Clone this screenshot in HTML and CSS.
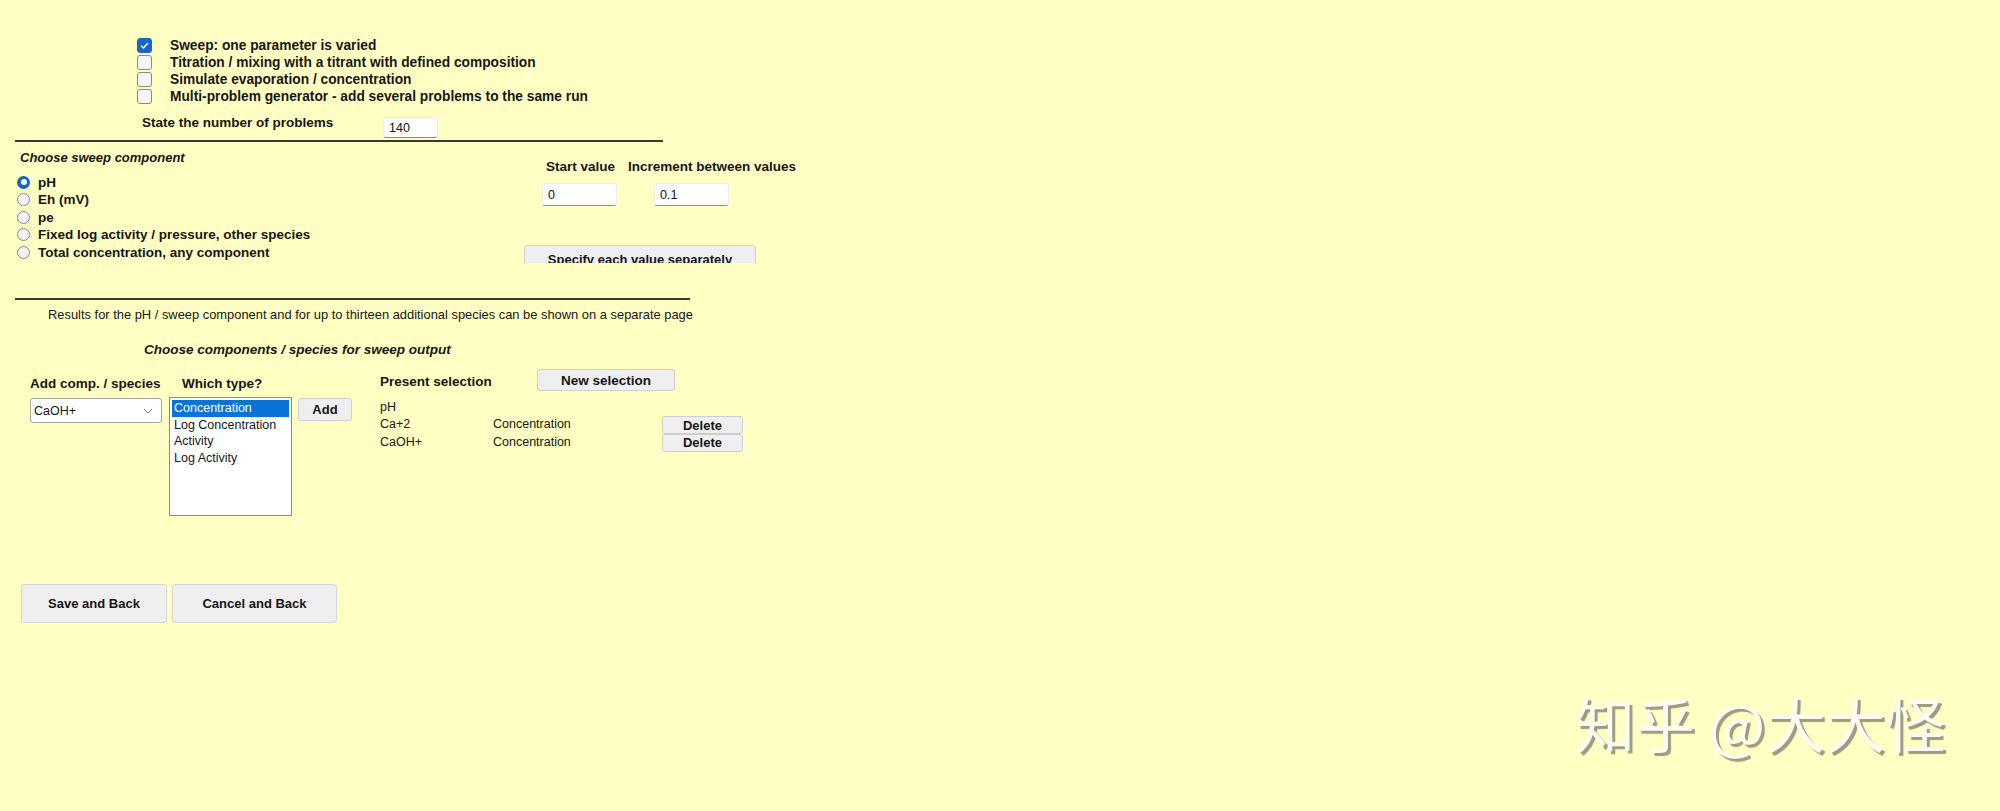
FILE: index.html
```html
<!DOCTYPE html>
<html lang="en">
<head>
<meta charset="utf-8">
<title>Sweep settings</title>
<link rel="stylesheet" href="styles.css">
</head>
<body>
  <section class="modes">
    <div class="mode"><span class="cb on"><svg width="9" height="7" viewBox="0 0 9 7"><path d="M1 3.6 L3.4 6 L8 1" fill="none" stroke="#fff" stroke-width="1.3"/></svg></span>Sweep: one parameter is varied</div>
    <div class="mode"><span class="cb"></span>Titration / mixing with a titrant with defined composition</div>
    <div class="mode"><span class="cb"></span>Simulate evaporation / concentration</div>
    <div class="mode"><span class="cb"></span>Multi-problem generator - add several problems to the same run</div>
  </section>

  <div class="count">
    <span class="count-label">State the number of problems</span>
    <input class="field count-field" type="text" value="140">
  </div>
  <div class="rule"></div>

  <section class="sweep">
    <div class="sweep-left">
      <div class="sweep-title">Choose sweep component</div>
      <div class="radios">
        <div class="radio-row"><span class="rb on"></span>pH</div>
        <div class="radio-row"><span class="rb"></span>Eh (mV)</div>
        <div class="radio-row"><span class="rb"></span>pe</div>
        <div class="radio-row"><span class="rb"></span>Fixed log activity / pressure, other species</div>
        <div class="radio-row"><span class="rb"></span>Total concentration, any component</div>
      </div>
    </div>
    <div class="sweep-right">
      <div class="value-heads"><span>Start value</span><span>Increment between values</span></div>
      <div class="value-fields">
        <input class="field value-field" type="text" value="0">
        <input class="field value-field" type="text" value="0.1">
      </div>
      <div class="specify-clip"><button class="btn specify">Specify each value separately</button></div>
    </div>
  </section>
  <div class="rule wide"></div>

  <p class="note">Results for the pH / sweep component and for up to thirteen additional species can be shown on a separate page</p>
  <p class="output-title">Choose components / species for sweep output</p>

  <section class="picker">
    <div class="pick-species">
      <div class="pick-label">Add comp. / species</div>
      <div class="select"><span>CaOH+</span><svg width="10" height="6" viewBox="0 0 10 6"><path d="M1 1 L5 5 L9 1" fill="none" stroke="#7a7a7a" stroke-width="1"/></svg></div>
    </div>
    <div class="pick-type">
      <div class="pick-label type-label">Which type?</div>
      <div class="listbox">
        <div class="opt sel">Concentration</div>
        <div class="opt">Log Concentration</div>
        <div class="opt">Activity</div>
        <div class="opt">Log Activity</div>
      </div>
    </div>
    <div class="pick-add">
      <button class="btn add">Add</button>
    </div>
    <div class="selection">
      <div class="selection-head">
        <span class="selection-title">Present selection</span>
        <button class="btn newsel">New selection</button>
      </div>
      <div class="sel-rows">
        <div class="sel-row"><span class="sel-name">pH</span></div>
        <div class="sel-row"><span class="sel-name">Ca+2</span><span class="sel-type">Concentration</span><button class="btn del">Delete</button></div>
        <div class="sel-row"><span class="sel-name">CaOH+</span><span class="sel-type">Concentration</span><button class="btn del">Delete</button></div>
      </div>
    </div>
  </section>

  <div class="actions">
    <button class="btn big save">Save and Back</button>
    <button class="btn big cancel">Cancel and Back</button>
  </div>

  <div class="watermark">知乎 @大大怪</div>
</body>
</html>
```

FILE: styles.css
```css
html, body {
  margin: 0;
}

body {
  width: 2000px;
  height: 811px;
  overflow: hidden;
  position: relative;
  background: #ffffc4;
  color: #161616;
  font-family: "Liberation Sans", Arial, sans-serif;
  font-size: 13.5px;
}

p {
  margin: 0;
}

/* run type checkboxes */
.modes {
  padding: 37px 0 0 137px;
}

.mode {
  display: flex;
  align-items: center;
  height: 17px;
  gap: 18px;
  font-size: 13.75px;
  font-weight: bold;
}

.cb {
  width: 15px;
  height: 15px;
  box-sizing: border-box;
  border: 1px solid #8a8a8a;
  border-radius: 3px;
  background: #f6f6f6;
  display: flex;
  align-items: center;
  justify-content: center;
}

.cb.on {
  background: #1a64c4;
  border-color: #1a64c4;
}

.count {
  display: flex;
  align-items: flex-start;
  padding: 9px 0 0 142px;
}

.count-label {
  width: 241px;
  line-height: 17px;
  font-weight: bold;
}

.field {
  box-sizing: border-box;
  margin: 0;
  padding: 0 0 0 5px;
  background: #fff;
  border: 1px solid #ececec;
  border-bottom: 1px solid #8d8d8d;
  border-radius: 3px;
  font-family: "Liberation Sans", Arial, sans-serif;
  font-size: 12.5px;
  color: #111;
  outline: none;
}

.count-field {
  margin-top: 3px;
  width: 55px;
  height: 21px;
}

.rule {
  margin: 2px 0 0 15px;
  width: 648px;
  border-top: 2px solid #3a3a30;
}

.rule.wide {
  margin-top: 0;
  width: 675px;
}

/* sweep component */
.sweep {
  display: flex;
  height: 156px;
}

.sweep-left {
  width: 507px;
  padding: 6.5px 0 0 17px;
}

.sweep-title {
  padding-left: 3px;
  line-height: 17px;
  font-size: 13px;
  font-style: italic;
  font-weight: bold;
}

.radios {
  margin-top: 8px;
}

.radio-row {
  display: flex;
  align-items: center;
  height: 17.5px;
  gap: 8px;
  font-weight: bold;
}

.rb {
  width: 13px;
  height: 13px;
  box-sizing: border-box;
  border: 1px solid #8b8b8b;
  border-radius: 50%;
  background: #f1f1f6;
  display: flex;
  align-items: center;
  justify-content: center;
}

.rb.on {
  border: none;
  background: #1a64c4;
}

.rb.on::after {
  content: "";
  width: 6px;
  height: 6px;
  border-radius: 50%;
  background: #fff;
}

.sweep-right {
  padding-top: 15.5px;
}

.value-heads {
  display: flex;
  gap: 13px;
  padding-left: 22px;
  line-height: 17px;
  font-weight: bold;
}

.value-fields {
  display: flex;
  gap: 37px;
  padding-left: 18px;
  margin-top: 8.5px;
}

.value-field {
  width: 75px;
  height: 23px;
}

.specify-clip {
  margin-top: 39px;
  height: 18px;
  overflow: hidden;
}

/* buttons */
.btn {
  box-sizing: border-box;
  margin: 0;
  padding: 0;
  background: #efefef;
  border: 1px solid #cfcfcf;
  border-radius: 3px;
  font-family: "Liberation Sans", Arial, sans-serif;
  font-size: 13px;
  font-weight: bold;
  color: #161616;
}

.specify {
  width: 232px;
  height: 28px;
}

/* output species */
.note {
  padding: 5.5px 0 0 48px;
  line-height: 17px;
  font-size: 12.9px;
}

.output-title {
  padding: 18px 0 0 144px;
  line-height: 17px;
  font-style: italic;
  font-weight: bold;
}

.picker {
  display: flex;
  align-items: flex-start;
  margin-top: 11.5px;
}

.pick-label {
  padding-top: 5.5px;
  line-height: 17px;
  font-weight: bold;
}

.pick-species {
  margin-left: 30px;
  width: 132px;
}

.select {
  box-sizing: border-box;
  margin-top: 6.5px;
  height: 25px;
  padding: 0 8px 0 3px;
  background: #fff;
  border: 1px solid #a3a3a3;
  border-radius: 3px;
  display: flex;
  align-items: center;
  justify-content: space-between;
  font-size: 12.5px;
}

.pick-type {
  margin-left: 7px;
  width: 123px;
}

.type-label {
  padding-left: 13px;
}

.listbox {
  box-sizing: border-box;
  margin-top: 5.5px;
  height: 119px;
  padding: 2px;
  background: #fff;
  border: 1px solid #858a9c;
  font-size: 12.5px;
}

.opt {
  height: 16.5px;
  line-height: 16.5px;
  padding-left: 2px;
}

.opt.sel {
  background: #0a74d6;
  color: #fff;
}

.pick-add {
  margin-left: 6px;
  padding-top: 29px;
}

.add {
  width: 54px;
  height: 23px;
}

.selection {
  margin-left: 28px;
}

.selection-head {
  display: flex;
  align-items: center;
  height: 22px;
}

.selection-title {
  width: 157px;
  padding-top: 3px;
  font-weight: bold;
}

.newsel {
  width: 138px;
  height: 22px;
  font-size: 13.5px;
}

.sel-rows {
  margin-top: 7px;
  font-size: 12.5px;
}

.sel-row {
  display: flex;
  align-items: center;
  height: 17.5px;
}

.sel-name {
  width: 113px;
}

.sel-type {
  width: 169px;
}

.del {
  width: 81px;
  height: 18px;
  flex: none;
  margin-top: 1.5px;
}

/* bottom actions */
.actions {
  display: flex;
  gap: 5px;
  margin: 68px 0 0 21px;
}

.big {
  height: 39px;
  border-color: #d6d6d6;
}

.save {
  width: 146px;
}

.cancel {
  width: 165px;
}

.watermark {
  position: absolute;
  left: 1575px;
  top: 692px;
  font-family: "Noto Sans CJK SC", "Liberation Sans", sans-serif;
  font-size: 60px;
  line-height: 60px;
  color: #fbfbef;
  text-shadow: 3px 3px 1px #9e9b7f;
  white-space: nowrap;
}
```
